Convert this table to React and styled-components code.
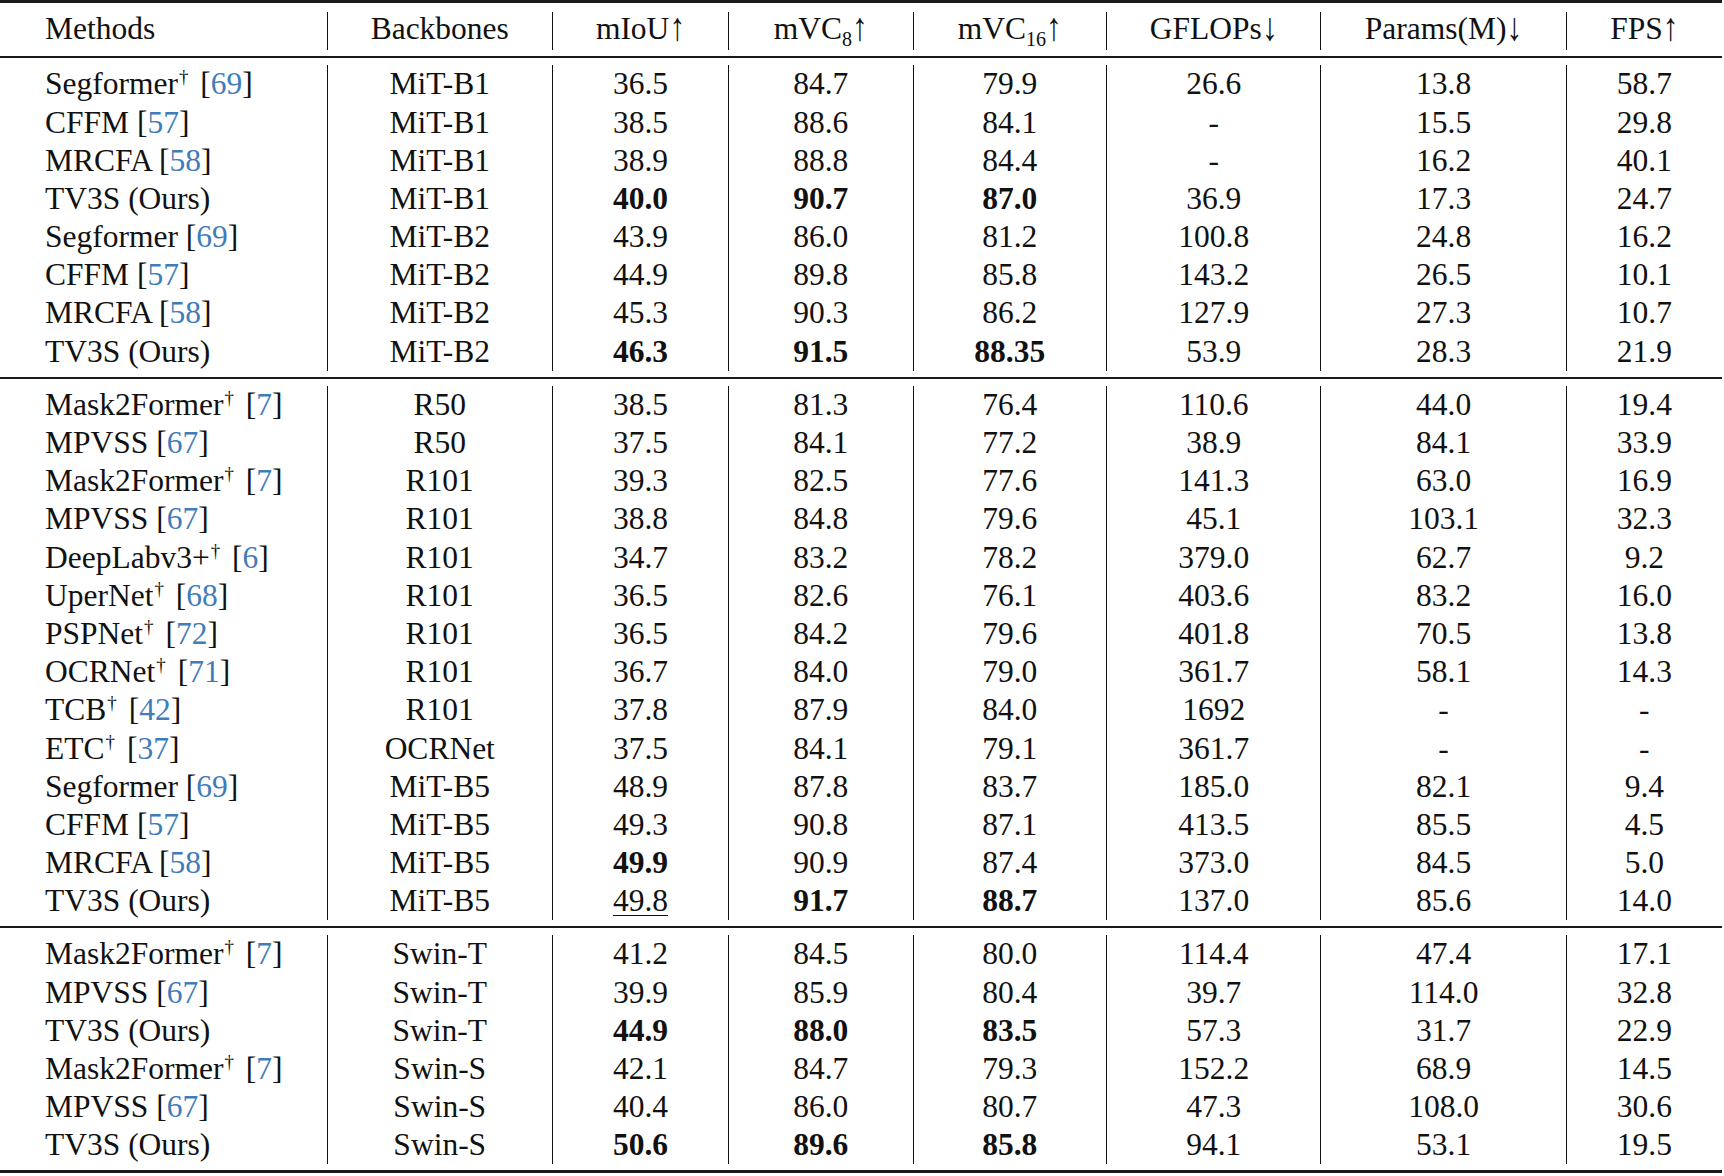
import React from 'react';
import styled, { createGlobalStyle } from 'styled-components';

const GlobalStyle = createGlobalStyle`
  body {
    margin: 0;
    background: #ffffff;
  }
`;

const Table = styled.div`
  width: 1722px;
  font-family: 'Liberation Serif', 'Times New Roman', serif;
  font-size: 31.5px;
  color: #111;
`;

const Rule = styled.div`
  height: ${p => (p.$thick ? '3px' : '2px')};
  background: #1a1a1a;
`;

const Head = styled.div`
  padding: 9px 0 6px;
`;

const Group = styled.div`
  padding: 7px 0 ${p => p.$bottom || 6}px;
`;

const Row = styled.div`
  display: grid;
  grid-template-columns: 326.5px 225.5px 176px 184.6px 193.4px 214.5px 245.2px 1fr;
  height: ${p => (p.$head ? '38px' : '38.2px')};
`;

const Cell = styled.div`
  display: flex;
  align-items: center;
  justify-content: ${p => (p.$left ? 'flex-start' : 'center')};
  padding-left: ${p => (p.$left ? '45px' : '0')};
  padding-bottom: ${p => (p.$head ? '4px' : '0')};
  border-left: ${p => (p.$left ? 'none' : '1px solid #111')};
  white-space: nowrap;
  line-height: 1;
`;

const Value = styled.span`
  font-weight: ${p => (p.$bold ? 700 : 400)};
  text-decoration: ${p => (p.$under ? 'underline' : 'none')};
  text-decoration-thickness: 1px;
  text-underline-offset: 4px;
`;

const Cite = styled.span`
  color: #3f7cb9;
`;

const Dagger = styled.sup`
  font-size: 19px;
  vertical-align: 0;
  position: relative;
  top: -11px;
  margin-left: 1px;
  margin-right: 4px;
`;

const Sub = styled.sub`
  font-size: 20px;
  vertical-align: 0;
  position: relative;
  top: 7px;
`;

const Arrow = styled.span`
  display: inline-block;
  transform: scaleY(1.25) translateY(-1px);
`;

const groups = [
  [
    ['Segformer', true, 69, 'MiT-B1', '36.5', '84.7', '79.9', '26.6', '13.8', '58.7'],
    ['CFFM', false, 57, 'MiT-B1', '38.5', '88.6', '84.1', '-', '15.5', '29.8'],
    ['MRCFA', false, 58, 'MiT-B1', '38.9', '88.8', '84.4', '-', '16.2', '40.1'],
    ['TV3S (Ours)', false, null, 'MiT-B1', '*40.0', '*90.7', '*87.0', '36.9', '17.3', '24.7'],
    ['Segformer', false, 69, 'MiT-B2', '43.9', '86.0', '81.2', '100.8', '24.8', '16.2'],
    ['CFFM', false, 57, 'MiT-B2', '44.9', '89.8', '85.8', '143.2', '26.5', '10.1'],
    ['MRCFA', false, 58, 'MiT-B2', '45.3', '90.3', '86.2', '127.9', '27.3', '10.7'],
    ['TV3S (Ours)', false, null, 'MiT-B2', '*46.3', '*91.5', '*88.35', '53.9', '28.3', '21.9'],
  ],
  [
    ['Mask2Former', true, 7, 'R50', '38.5', '81.3', '76.4', '110.6', '44.0', '19.4'],
    ['MPVSS', false, 67, 'R50', '37.5', '84.1', '77.2', '38.9', '84.1', '33.9'],
    ['Mask2Former', true, 7, 'R101', '39.3', '82.5', '77.6', '141.3', '63.0', '16.9'],
    ['MPVSS', false, 67, 'R101', '38.8', '84.8', '79.6', '45.1', '103.1', '32.3'],
    ['DeepLabv3+', true, 6, 'R101', '34.7', '83.2', '78.2', '379.0', '62.7', '9.2'],
    ['UperNet', true, 68, 'R101', '36.5', '82.6', '76.1', '403.6', '83.2', '16.0'],
    ['PSPNet', true, 72, 'R101', '36.5', '84.2', '79.6', '401.8', '70.5', '13.8'],
    ['OCRNet', true, 71, 'R101', '36.7', '84.0', '79.0', '361.7', '58.1', '14.3'],
    ['TCB', true, 42, 'R101', '37.8', '87.9', '84.0', '1692', '-', '-'],
    ['ETC', true, 37, 'OCRNet', '37.5', '84.1', '79.1', '361.7', '-', '-'],
    ['Segformer', false, 69, 'MiT-B5', '48.9', '87.8', '83.7', '185.0', '82.1', '9.4'],
    ['CFFM', false, 57, 'MiT-B5', '49.3', '90.8', '87.1', '413.5', '85.5', '4.5'],
    ['MRCFA', false, 58, 'MiT-B5', '*49.9', '90.9', '87.4', '373.0', '84.5', '5.0'],
    ['TV3S (Ours)', false, null, 'MiT-B5', '_49.8', '*91.7', '*88.7', '137.0', '85.6', '14.0'],
  ],
  [
    ['Mask2Former', true, 7, 'Swin-T', '41.2', '84.5', '80.0', '114.4', '47.4', '17.1'],
    ['MPVSS', false, 67, 'Swin-T', '39.9', '85.9', '80.4', '39.7', '114.0', '32.8'],
    ['TV3S (Ours)', false, null, 'Swin-T', '*44.9', '*88.0', '*83.5', '57.3', '31.7', '22.9'],
    ['Mask2Former', true, 7, 'Swin-S', '42.1', '84.7', '79.3', '152.2', '68.9', '14.5'],
    ['MPVSS', false, 67, 'Swin-S', '40.4', '86.0', '80.7', '47.3', '108.0', '30.6'],
    ['TV3S (Ours)', false, null, 'Swin-S', '*50.6', '*89.6', '*85.8', '94.1', '53.1', '19.5'],
  ],
];

const Num = ({ v }) => {
  const bold = v.startsWith('*');
  const under = v.startsWith('_');
  const text = bold || under ? v.slice(1) : v;
  return (
    <Value $bold={bold} $under={under}>
      {text}
    </Value>
  );
};

const Method = ({ name, dagger, cite }) => (
  <Cell $left>
    <span>
      {name}
      {dagger && <Dagger>†</Dagger>}
      {cite != null && (
        <>
          {' '}[<Cite>{cite}</Cite>]
        </>
      )}
    </span>
  </Cell>
);

const App = () => {
  return (
    <>
      <GlobalStyle />
      <Table>
        <Rule $thick />
        <Head>
          <Row $head>
            <Cell $left $head>Methods</Cell>
            <Cell $head>Backbones</Cell>
            <Cell $head>
              <span>mIoU<Arrow>↑</Arrow></span>
            </Cell>
            <Cell $head>
              <span>mVC<Sub>8</Sub><Arrow>↑</Arrow></span>
            </Cell>
            <Cell $head>
              <span>mVC<Sub>16</Sub><Arrow>↑</Arrow></span>
            </Cell>
            <Cell $head>
              <span>GFLOPs<Arrow>↓</Arrow></span>
            </Cell>
            <Cell $head>
              <span>Params(M)<Arrow>↓</Arrow></span>
            </Cell>
            <Cell $head>
              <span>FPS<Arrow>↑</Arrow></span>
            </Cell>
          </Row>
        </Head>
        {groups.map((rows, gi) => (
          <React.Fragment key={gi}>
            <Rule />
            <Group>
              {rows.map((r, ri) => (
                <Row key={ri}>
                  <Method name={r[0]} dagger={r[1]} cite={r[2]} />
                  <Cell>{r[3]}</Cell>
                  {r.slice(4).map((v, vi) => (
                    <Cell key={vi}>
                      <Num v={v} />
                    </Cell>
                  ))}
                </Row>
              ))}
            </Group>
          </React.Fragment>
        ))}
        <Rule $thick />
      </Table>
    </>
  );
};

export default App;
